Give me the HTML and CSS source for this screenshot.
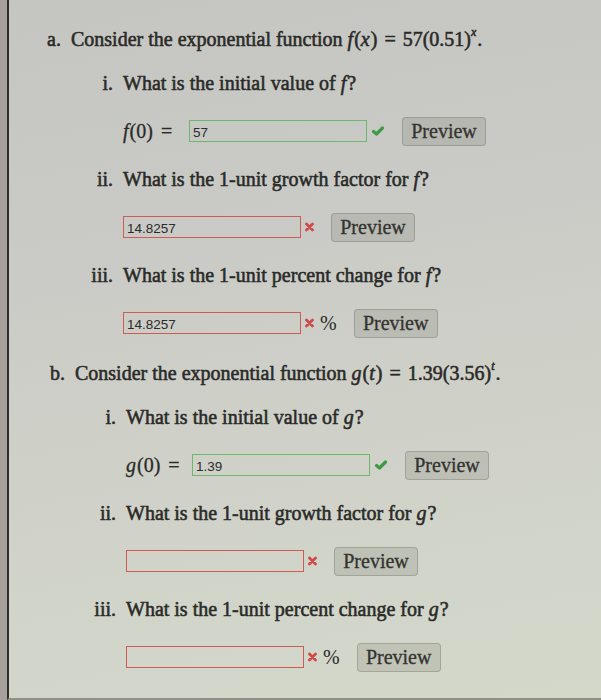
FILE: index.html
```html
<!DOCTYPE html>
<html>
<head>
<meta charset="utf-8">
<link rel="stylesheet" href="styles.css">
</head>
<body>
<div class="page">
  <div class="part">
    <div class="part-head"><span class="pm">a.</span><span>Consider the exponential function <span class="m"><i class="mi">f</i>(<i class="mi">x</i>)<span class="eq">=</span>57(0.51)<sup><i class="mi">x</i></sup></span>.</span></div>
    <div class="q"><span class="qm">i.</span><span>What is the initial value of <i class="mi">f</i>?</span></div>
    <div class="row"><span class="lbl"><i class="mi">f</i>(0)<span class="eq">=</span></span><input class="inp ok" value="57"><svg class="ico" width="14" height="12" viewBox="0 0 14 12"><path d="M2.5 6.5 L5.5 9 L11.5 3" fill="none" stroke="#3f9a45" stroke-width="3.2" stroke-linejoin="round" stroke-linecap="round"/></svg><button class="btn">Preview</button></div>
    <div class="q"><span class="qm">ii.</span><span>What is the 1-unit growth factor for <i class="mi">f</i>?</span></div>
    <div class="row"><input class="inp bad" value="14.8257"><svg class="ico" width="9" height="10" viewBox="0 0 9 10"><path d="M1.5 2 L7.5 8 M7.5 2 L1.5 8" fill="none" stroke="#cf4a4a" stroke-width="2.8" stroke-linecap="round"/></svg><button class="btn">Preview</button></div>
    <div class="q"><span class="qm">iii.</span><span>What is the 1-unit percent change for <i class="mi">f</i>?</span></div>
    <div class="row"><input class="inp bad" value="14.8257"><svg class="ico" width="9" height="10" viewBox="0 0 9 10"><path d="M1.5 2 L7.5 8 M7.5 2 L1.5 8" fill="none" stroke="#cf4a4a" stroke-width="2.8" stroke-linecap="round"/></svg><span class="pct">%</span><button class="btn">Preview</button></div>
  </div>
  <div class="part part-b">
    <div class="part-head"><span class="pm">b.</span><span>Consider the exponential function <span class="m"><i class="mi">g</i>(<i class="mi">t</i>)<span class="eq">=</span>1.39(3.56)<sup><i class="mi">t</i></sup></span>.</span></div>
    <div class="q"><span class="qm">i.</span><span>What is the initial value of <i class="mi">g</i>?</span></div>
    <div class="row"><span class="lbl"><i class="mi">g</i>(0)<span class="eq">=</span></span><input class="inp ok" value="1.39"><svg class="ico" width="14" height="12" viewBox="0 0 14 12"><path d="M2.5 6.5 L5.5 9 L11.5 3" fill="none" stroke="#3f9a45" stroke-width="3.2" stroke-linejoin="round" stroke-linecap="round"/></svg><button class="btn">Preview</button></div>
    <div class="q"><span class="qm">ii.</span><span>What is the 1-unit growth factor for <i class="mi">g</i>?</span></div>
    <div class="row"><input class="inp bad" value=""><svg class="ico" width="9" height="10" viewBox="0 0 9 10"><path d="M1.5 2 L7.5 8 M7.5 2 L1.5 8" fill="none" stroke="#cf4a4a" stroke-width="2.8" stroke-linecap="round"/></svg><button class="btn">Preview</button></div>
    <div class="q"><span class="qm">iii.</span><span>What is the 1-unit percent change for <i class="mi">g</i>?</span></div>
    <div class="row"><input class="inp bad" value=""><svg class="ico" width="9" height="10" viewBox="0 0 9 10"><path d="M1.5 2 L7.5 8 M7.5 2 L1.5 8" fill="none" stroke="#cf4a4a" stroke-width="2.8" stroke-linecap="round"/></svg><span class="pct">%</span><button class="btn">Preview</button></div>
  </div>
</div>
</body>
</html>
```

FILE: styles.css
```css
html, body {
  margin: 0;
  padding: 0;
}
body {
  background: #a6a19a;
  font-family: "Liberation Serif", "Times New Roman", serif;
  color: #2a2a28;
}
.page {
  margin-left: 7px;
  border-left: 2px solid #2f2e2c;
  border-bottom: 2px solid #8f9187;
  box-sizing: border-box;
  height: 700px;
  padding-top: 18px;
  background: linear-gradient(170deg, #c5c5c1 0%, #cacbc6 35%, #d0d2c9 65%, #d4d8ca 100%);
  overflow: hidden;
}
.part-head {
  height: 42px;
  display: flex;
  align-items: center;
  padding-left: 38px;
  font-size: 20px;
  -webkit-text-stroke: 0.55px #2a2a28;
  white-space: nowrap;
}
.pm {
  width: 24px;
  flex: none;
}
.part-b {
  margin-top: 4px;
  padding-left: 3px;
}
.part-b .pm {
  width: 25px;
}
.q {
  height: 46px;
  display: flex;
  align-items: center;
  font-size: 20px;
  -webkit-text-stroke: 0.55px #2a2a28;
  white-space: nowrap;
}
.qm {
  width: 30px;
  margin-left: 74px;
  margin-right: 10px;
  text-align: right;
  flex: none;
}
.row {
  height: 50px;
  display: flex;
  align-items: center;
  padding-left: 114px;
}
.m {
  white-space: nowrap;
}
.mi {
  font-style: italic;
  margin-right: 1px;
}
.eq {
  margin: 0 7px;
}
sup {
  font-size: 12px;
  vertical-align: 10px;
  line-height: 0;
}
.lbl {
  width: 66px;
  flex: none;
  font-size: 20px;
  white-space: nowrap;
  -webkit-text-stroke: 0.3px #2a2a28;
}
.lbl .eq {
  margin: 0 0 0 8px;
}
.inp {
  width: 178px;
  height: 22px;
  box-sizing: border-box;
  padding: 2px 3px 0;
  margin: 0;
  background: transparent;
  font-family: "Liberation Sans", Arial, sans-serif;
  font-size: 13.5px;
  color: #2b2b2b;
  border-radius: 0;
  outline: none;
}
.ok {
  border: 1px solid #6db86a;
}
.bad {
  border: 1px solid #cf5b55;
}
.ico {
  margin-left: 4px;
  flex: none;
}
.pct {
  font-size: 20px;
  margin-left: 6px;
}
.btn {
  margin-left: 17px;
  width: 84px;
  height: 29px;
  box-sizing: border-box;
  padding: 0;
  font-family: "Liberation Serif", "Times New Roman", serif;
  font-size: 20px;
  color: #333330;
  -webkit-text-stroke: 0.3px #333330;
  background: rgba(60, 60, 40, 0.12);
  border: 1px solid rgba(60, 60, 50, 0.22);
  border-radius: 4px;
}
```
